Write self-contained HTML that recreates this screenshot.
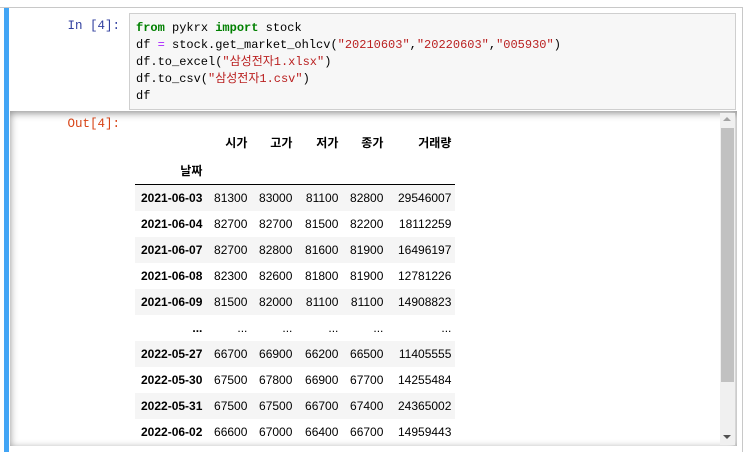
<!DOCTYPE html>
<html><head><meta charset="utf-8"><style>
body{margin:0;width:747px;height:452px;background:#fff;position:relative;overflow:hidden;font-family:"Liberation Sans","Noto Sans CJK KR",sans-serif}
.topline{position:absolute;left:0;top:7px;width:742px;height:1px;background:#c8c8c8}
.rline{position:absolute;left:742px;top:7px;width:1px;height:445px;background:#c8c8c8}
.blue{position:absolute;left:4px;top:8px;width:5px;height:444px;background:#42a5f5}
.prompt{position:absolute;font-family:"Liberation Mono","Noto Sans CJK KR",monospace;font-size:12.5px;text-align:right;width:120px;left:0}
.code{position:absolute;left:129px;top:13px;width:607px;height:97px;background:#f7f7f7;border:1px solid #cfcfcf;box-sizing:border-box;font-family:"Liberation Mono","Noto Sans CJK KR",monospace;font-size:12px;line-height:17px;padding:6px 0 0 6px;white-space:pre;color:#000}
.k{color:#008000;font-weight:bold}.s{color:#ba2121}.o{color:#aa22ff}
.out{position:absolute;left:10px;top:111px;width:727px;height:335px;box-shadow:inset 0 2px 8px rgba(0,0,0,.45);overflow:hidden}
.sb{position:absolute;left:720px;top:113px;width:15px;height:332px;background:#f0f0f0}
.thumb{position:absolute;left:721px;top:128px;width:13px;height:254px;background:#c1c1c1}
table{position:absolute;left:135px;top:128px;border-collapse:collapse;font-size:12px;color:#000}
td,th{text-align:right;padding:0 4px 0 6px;height:26px;white-space:nowrap}
thead th{height:28px;font-weight:bold}
tbody th{font-weight:bold}
tbody tr:nth-child(odd){background:#f5f5f5}
thead tr:last-child th{border-bottom:1px solid #000}
</style></head><body>
<div class="topline"></div><div class="rline"></div><div class="blue"></div>
<div class="prompt" style="top:19px;color:#303f9f">In [4]:</div>
<div class="code"><span class="k">from</span> pykrx <span class="k">import</span> stock
df <span class="o">=</span> stock.get_market_ohlcv(<span class="s">"20210603"</span>,<span class="s">"20220603"</span>,<span class="s">"005930"</span>)
df.to_excel(<span class="s">"삼성전자1.xlsx"</span>)
df.to_csv(<span class="s">"삼성전자1.csv"</span>)
df</div>
<div class="prompt" style="top:117px;color:#d84315">Out[4]:</div>
<div class="out"></div>
<table>
<thead><tr><th style="width:58px"></th><th style="width:35px">시가</th><th style="width:35px">고가</th><th style="width:36px">저가</th><th style="width:35px">종가</th><th style="width:58px">거래량</th></tr>
<tr><th>날짜</th><th></th><th></th><th></th><th></th><th></th></tr></thead>
<tbody>
<tr><th>2021-06-03</th><td>81300</td><td>83000</td><td>81100</td><td>82800</td><td>29546007</td></tr>
<tr><th>2021-06-04</th><td>82700</td><td>82700</td><td>81500</td><td>82200</td><td>18112259</td></tr>
<tr><th>2021-06-07</th><td>82700</td><td>82800</td><td>81600</td><td>81900</td><td>16496197</td></tr>
<tr><th>2021-06-08</th><td>82300</td><td>82600</td><td>81800</td><td>81900</td><td>12781226</td></tr>
<tr><th>2021-06-09</th><td>81500</td><td>82000</td><td>81100</td><td>81100</td><td>14908823</td></tr>
<tr><th>...</th><td>...</td><td>...</td><td>...</td><td>...</td><td>...</td></tr>
<tr><th>2022-05-27</th><td>66700</td><td>66900</td><td>66200</td><td>66500</td><td>11405555</td></tr>
<tr><th>2022-05-30</th><td>67500</td><td>67800</td><td>66900</td><td>67700</td><td>14255484</td></tr>
<tr><th>2022-05-31</th><td>67500</td><td>67500</td><td>66700</td><td>67400</td><td>24365002</td></tr>
<tr><th>2022-06-02</th><td>66600</td><td>67000</td><td>66400</td><td>66700</td><td>14959443</td></tr>
</tbody></table>
<div class="sb"></div><div class="thumb"></div>
<div style="position:absolute;left:723px;top:117px;width:0;height:0;border-left:4px solid transparent;border-right:4px solid transparent;border-bottom:4px solid #a3a3a3"></div>
<div style="position:absolute;left:723px;top:435px;width:0;height:0;border-left:4px solid transparent;border-right:4px solid transparent;border-top:4px solid #505050"></div>
</body></html>
